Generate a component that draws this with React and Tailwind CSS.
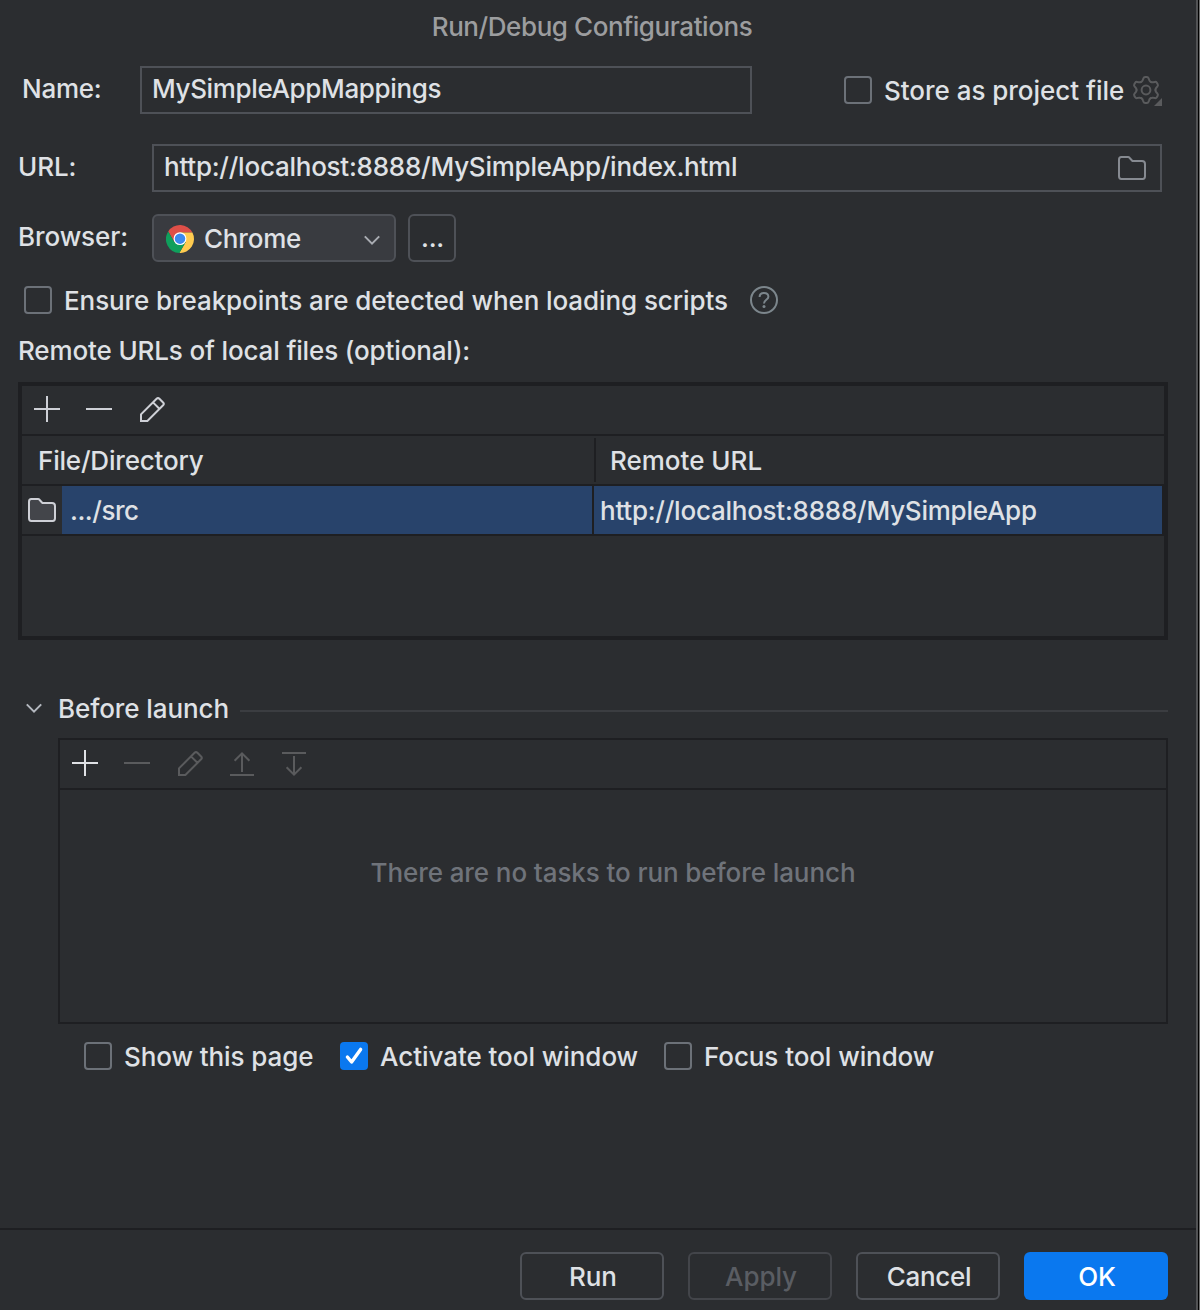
import React, { useState } from 'react';
import clsx from 'clsx';

function Icon({ children, className }) {
  return (
    <svg viewBox="0 0 32 32" fill="none" stroke="currentColor" strokeWidth="2" className={clsx('size-8 shrink-0', className)}>
      {children}
    </svg>
  );
}

const PlusIcon = (props) => <Icon {...props}><path d="M2 15H28M15 2V28" /></Icon>;
const MinusIcon = (props) => <Icon {...props}><path d="M2 15H28" /></Icon>;
const PencilIcon = (props) => (
  <Icon {...props}>
    <path d="M5 27V20.4L20.6 4.8Q22 3.4 23.4 4.8L27.1 8.5Q28.5 9.9 27.1 11.3L11.4 27ZM17 8.4L23.6 15" />
  </Icon>
);
const UpIcon = (props) => <Icon {...props}><path d="M4 27H28M16 24V5.4M8.6 12.8L16 5.4L23.4 12.8" /></Icon>;
const DownIcon = (props) => <Icon {...props}><path d="M4 5H28M16 8V26.6M8.6 19.2L16 26.6L23.4 19.2" /></Icon>;
const ChevronIcon = (props) => <Icon {...props}><path d="M8.8 12.4L16 19.6L23.2 12.4" /></Icon>;
const FolderIcon = ({ fill, ...props }) => (
  <Icon {...props}>
    <path fill={fill} d="M16.2 8.7L16.5 9H26C27.7 9 29 10.3 29 12V24.3C29 25.9 27.9 27 26.7 27H5.3C4.1 27 3 25.9 3 24.3V7.7C3 6.1 4.1 5 5.3 5H12.2C12.5 5 12.8 5.1 13 5.3Z" />
  </Icon>
);

function GearIcon() {
  return (
    <Icon className="text-[#5a5b5d]">
      <g transform="translate(15 16)">
        {[0, 60, 120, 180, 240, 300].map((deg) => (
          <path
            key={deg}
            transform={`rotate(${deg})`}
            strokeLinecap="round"
            d="M-4.7 -8.2Q-3.5 -8.9 -3.1 -10.3L-2.6 -11.7Q-2.1 -13 -0.9 -13H0.9Q2.1 -13 2.6 -11.7L3.1 -10.3Q3.5 -8.9 4.7 -8.2"
          />
        ))}
        <circle r="4.4" />
      </g>
      <path stroke="none" fill="currentColor" d="M31 24V32H23Z" />
    </Icon>
  );
}

function HelpIcon() {
  return (
    <Icon className="text-[#7c868c]">
      <circle cx="16" cy="16" r="13" />
      <path d="M11.6 13C11.6 10.4 13.5 8.9 16 8.9C18.5 8.9 20.4 10.4 20.4 12.7C20.4 15.8 16 15.8 16 19.4" />
      <circle cx="16" cy="22.4" r="1.5" fill="currentColor" stroke="none" />
    </Icon>
  );
}

function ChromeIcon() {
  return (
    <svg viewBox="0 0 48 48" className="mt-px size-7 shrink-0">
      <path fill="#de4f48" d="M3.8 11A24 24 0 0 1 45.3 13L24 13V24L14.5 29.5Z" />
      <path fill="#ffcb50" d="M45.3 13A24 24 0 0 1 22.9 48L33.5 29.5L24 24V13Z" />
      <path fill="#0f9f5c" d="M22.9 48A24 24 0 0 1 3.8 11L14.5 29.5L24 24L33.5 29.5Z" />
      <circle cx="24" cy="23.4" r="11" fill="#fff" />
      <circle cx="24" cy="23.4" r="9" fill="#3b8af0" />
    </svg>
  );
}

function Checkbox({ label, checked, onChange, className }) {
  return (
    <label className="flex items-center">
      <input type="checkbox" checked={checked} onChange={onChange} className="sr-only" />
      <span className={clsx('size-7 shrink-0 rounded-[4px]', checked ? 'bg-[#0a78ef]' : 'border-2 border-[#6c7178]')}>
        {checked && (
          <svg viewBox="0 0 28 28" fill="none" stroke="#fff" strokeWidth="3.4" strokeLinecap="round" strokeLinejoin="round">
            <path d="M7.4 15L11.6 20L20.6 7.4" />
          </svg>
        )}
      </span>
      <span className={clsx('ml-3 mt-px whitespace-nowrap', className)}>{label}</span>
    </label>
  );
}

function Button({ children, className }) {
  return <button className={clsx('flex h-12 w-36 items-center justify-center rounded-[6px] pl-0.5 pt-0.5', className)}>{children}</button>;
}

export default function App() {
  const [store, setStore] = useState(false);
  const [ensure, setEnsure] = useState(false);
  const [show, setShow] = useState(false);
  const [activate, setActivate] = useState(true);
  const [focus, setFocus] = useState(false);

  return (
    <div className="flex h-[1310px] w-[1200px] bg-black font-['Inter',sans-serif] text-[26px] font-[450] leading-8 tracking-[-0.09px] text-[#dfe1e5]">
      <div className="flex w-[1198px] flex-col border-r-2 border-[#525355] bg-[#2b2d30]">
        <h1 className="h-[66px] pr-3 pt-[11px] text-center tracking-[-0.42px] text-[#9c9d9f]">Run/Debug Configurations</h1>

        <div className="flex h-12 items-center pl-[22px]">
          <div className="w-[118px] pb-[3px] tracking-[-0.25px]">Name:</div>
          <div className="flex h-12 w-[612px] items-center border-2 border-[#4e5157] pb-[3px] pl-2.5 tracking-[-0.35px]">MySimpleAppMappings</div>
          <div className="ml-[92px] flex items-center">
            <div className="w-[287px]">
              <Checkbox label="Store as project file" className="tracking-[-0.03px]" checked={store} onChange={() => setStore(!store)} />
            </div>
            <GearIcon />
          </div>
        </div>

        <div className="mt-[30px] flex h-12 items-center pl-[18px]">
          <div className="w-[134px] pb-[3px]">URL:</div>
          <div className="flex h-12 w-[1010px] items-center justify-between border-2 border-[#4e5157] pl-2.5 pr-3">
            <span className="pb-[3px] tracking-[-0.24px]">http://localhost:8888/MySimpleApp/index.html</span>
            <FolderIcon className="text-[#868a91]" />
          </div>
        </div>

        <div className="mt-[22px] flex h-12 items-center pl-[18px]">
          <div className="w-[134px] pb-[3px]">Browser:</div>
          <div className="flex h-12 w-[244px] items-center rounded-[6px] border-2 border-[#4e5157] bg-[#393b40] pl-3 pr-1.5">
            <ChromeIcon />
            <span className="ml-2.5 flex-1 pt-0.5 tracking-[-0.2px]">Chrome</span>
            <ChevronIcon className="mt-1 text-[#a9acb2]" />
          </div>
          <button className="ml-3 flex h-12 w-12 items-center justify-center rounded-[6px] border-2 border-[#4e5157] pl-px tracking-[-0.3px]">...</button>
        </div>

        <div className="mt-[22px] flex h-8 items-center pl-6">
          <div className="w-[724px]">
            <Checkbox
              label="Ensure breakpoints are detected when loading scripts"
              checked={ensure}
              onChange={() => setEnsure(!ensure)}
            />
          </div>
          <HelpIcon />
        </div>

        <div className="mt-[19px] pl-[18px] tracking-[-0.14px]">Remote URLs of local files (optional):</div>

        <div className="ml-[18px] mt-[15px] h-[258px] w-[1150px] border-4 border-[#1e1f22]">
          <div className="flex h-[50px] gap-5 border-b-2 border-[#1e1f22] pl-2.5 pt-2 text-[#ced0d6]">
            <PlusIcon />
            <MinusIcon />
            <PencilIcon />
          </div>
          <div className="flex h-[50px] items-center border-b-2 border-[#1e1f22] pt-0.5">
            <div className="w-[572px] pl-4 tracking-[-0.19px]">File/Directory</div>
            <div className="-mt-0.5 h-11 w-0.5 bg-[#1e1f22]" />
            <div className="pl-3.5 tracking-normal">Remote URL</div>
          </div>
          <div className="flex h-[50px] border-b-2 border-r-2 border-[#1e1f22]">
            <div className="flex w-10 items-center pl-1"><FolderIcon fill="#43454a" className="text-[#ced0d6]" /></div>
            <div className="flex w-[532px] items-center border-r-2 border-[#1e1f22] bg-[#28436b] pl-2 pt-0.5 tracking-[-0.45px]">.../src</div>
            <div className="flex flex-1 items-center bg-[#28436b] pl-1.5 pt-0.5 tracking-[-0.24px]">http://localhost:8888/MySimpleApp</div>
          </div>
        </div>

        <div className="mt-[52px] flex h-8 items-center pl-[18px]">
          <ChevronIcon className="text-[#b4b8bf]" />
          <span className="ml-2 w-[182px] pt-px">Before launch</span>
          <div className="mt-1.5 h-0.5 w-[928px] bg-[#3b3d41]" />
        </div>

        <div className="ml-[58px] mt-[14px] h-[286px] w-[1110px] border-2 border-[#1e1f22]">
          <div className="flex h-[50px] gap-5 border-b-2 border-[#1e1f22] pl-2.5 pt-2 text-[#5a5b5d]">
            <PlusIcon className="text-[#dfe1e5]" />
            <MinusIcon />
            <PencilIcon />
            <UpIcon />
            <DownIcon />
          </div>
          <p className="pt-[67px] text-center text-[#6f737a]">There are no tasks to run before launch</p>
        </div>

        <div className="mt-4 flex h-8 items-center pl-[84px]">
          <div className="w-64"><Checkbox label="Show this page" checked={show} onChange={() => setShow(!show)} /></div>
          <div className="w-[324px]"><Checkbox label="Activate tool window" className="tracking-[-0.05px]" checked={activate} onChange={() => setActivate(!activate)} /></div>
          <Checkbox label="Focus tool window" checked={focus} onChange={() => setFocus(!focus)} />
        </div>

        <div className="mt-auto flex h-[82px] gap-6 border-t-2 border-[#1e1f22] pl-[520px] pt-[22px]">
          <Button className="border-2 border-[#4e5157]">Run</Button>
          <Button className="border-2 border-[#43454a] text-[#5a5d63]">Apply</Button>
          <Button className="border-2 border-[#4e5157] tracking-[-0.3px]">Cancel</Button>
          <Button className="bg-[#0a78ef] font-medium text-white">OK</Button>
        </div>
      </div>
      <div className="ml-px w-px bg-[#6e6e6e]" />
    </div>
  );
}
